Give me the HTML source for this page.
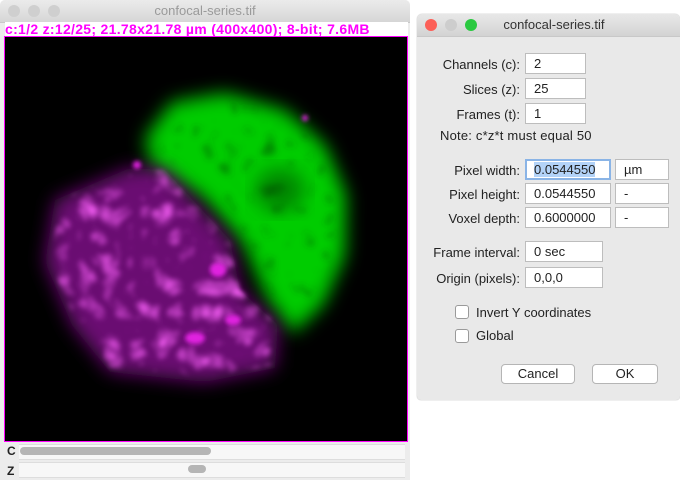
<!DOCTYPE html>
<html><head><style>
body{margin:0;width:680px;height:483px;background:#fff;position:relative;overflow:hidden;font-family:"Liberation Sans",sans-serif;font-size:13px;color:#222}
.abs{position:absolute}
.lw{left:0;top:0;width:410px;height:480px;background:#ececec;border-radius:5px 5px 0 0}
.tb{height:22px;background:linear-gradient(#ebebeb,#d6d6d6);border-bottom:1px solid #c8c8c8;text-align:center;line-height:22px;color:#9a9a9a;font-size:13px;border-radius:5px 5px 0 0}
.dot{position:absolute;top:5px;width:12px;height:12px;border-radius:50%}
.lbl{position:absolute;text-align:right;width:200px}
.fld{position:absolute;background:#fff;border:1px solid #bdbdbd;box-sizing:border-box;padding-left:8px;line-height:19px;height:21px}
.cb{position:absolute;width:12px;height:12px;border:1px solid #9a9a9a;border-radius:3px;background:#fff}
.btn{position:absolute;height:20px;background:#fff;border:1px solid #b5b5b5;border-radius:4px;box-sizing:border-box;text-align:center;line-height:18px}
</style></head><body>
<div class="abs lw">
 <div class="tb">confocal-series.tif
  <div class="dot" style="left:8px;background:#cfcfcf"></div><div class="dot" style="left:28px;background:#cfcfcf"></div><div class="dot" style="left:48px;background:#cfcfcf"></div>
 </div>
 <div class="abs" style="left:5px;top:22px;color:#f0f;font-weight:bold;font-size:14px;letter-spacing:0.3px;background:#fff;width:403px;height:14px;line-height:15px">c:1/2 z:12/25; 21.78x21.78 µm (400x400); 8-bit; 7.6MB</div>
 <div class="abs" style="left:4px;top:36px;width:402px;height:404px;border:1px solid #f0f;background:#000;overflow:hidden">
  <svg width="402" height="404" viewBox="5 37 402 404">
   <defs><filter id="b" x="-20%" y="-20%" width="140%" height="140%"><feGaussianBlur stdDeviation="9"/></filter>
   <filter id="b2"><feGaussianBlur stdDeviation="2"/></filter>
   <filter id="m" x="-10%" y="-10%" width="120%" height="120%"><feTurbulence baseFrequency="0.04" numOctaves="2" seed="5" result="t"/><feColorMatrix in="t" type="matrix" values="0 0 0 0 0.85  0 0 0 0 0.1  0 0 0 0 0.85  2.0 0 0 0 -0.45" result="c"/><feComposite in="c" in2="SourceAlpha" operator="in" result="r"/><feGaussianBlur in="r" stdDeviation="2"/></filter>
   <filter id="g" x="-10%" y="-10%" width="120%" height="120%"><feTurbulence baseFrequency="0.05" numOctaves="2" seed="9" result="t"/><feColorMatrix in="t" type="matrix" values="0 0 0 0 0  0 0 0 0 0.05  0 0 0 0 0  1.5 0 0 0 -0.55" result="c"/><feComposite in="c" in2="SourceAlpha" operator="in" result="r"/><feGaussianBlur in="r" stdDeviation="3"/></filter>
   </defs>
   <polygon filter="url(#b)" fill="#0c0" points="145,138 172,102 225,93 285,110 325,145 346,195 345,255 323,305 293,333 268,300 243,243 203,198 152,166"/>
   <polygon filter="url(#g)" fill="#000" points="160,130 180,108 225,100 285,115 320,148 338,195 337,255 318,300 295,322 272,295 248,240 208,195 160,160"/>
   <ellipse cx="280" cy="190" rx="25" ry="22" fill="#040" filter="url(#b)" opacity=".5"/>
   <polygon filter="url(#b)" fill="#6a0a72" points="55,200 130,168 165,170 230,240 240,290 278,325 275,368 205,382 110,372 72,325 45,262"/>
   <polygon filter="url(#m)" fill="#000" points="60,200 130,168 165,170 230,240 240,290 278,325 275,365 205,378 110,368 75,322 50,262"/>
   <g filter="url(#b2)" fill="#e020e0">
    <ellipse cx="218" cy="270" rx="8" ry="7"/><ellipse cx="233" cy="320" rx="8" ry="5"/>
    <ellipse cx="195" cy="338" rx="10" ry="6"/><ellipse cx="137" cy="165" rx="4" ry="4"/>
    <ellipse cx="305" cy="118" rx="3" ry="3"/>
   </g>
  </svg>
 </div>
 <div class="abs" style="left:7px;top:444px;font-weight:bold;font-size:12px">C</div>
 <div class="abs" style="left:19px;top:444px;width:386px;height:14px;background:#f7f7f7;border-top:1px solid #ddd;border-bottom:1px solid #ddd"></div>
 <div class="abs" style="left:20px;top:447px;width:191px;height:8px;background:#b5b5b5;border-radius:4px"></div>
 <div class="abs" style="left:7px;top:464px;font-weight:bold;font-size:12px">Z</div>
 <div class="abs" style="left:19px;top:462px;width:386px;height:14px;background:#f7f7f7;border-top:1px solid #ddd;border-bottom:1px solid #ddd"></div>
 <div class="abs" style="left:188px;top:465px;width:18px;height:8px;background:#b5b5b5;border-radius:4px"></div>
</div>

<div class="abs" style="left:417px;top:14px;width:263px;height:386px;background:#e9e9e9;border-radius:5px 5px 4px 4px;box-shadow:0 0 1px #999">
 <div class="tb" style="color:#333;background:linear-gradient(#e8e8e8,#d3d3d3)">&nbsp;&nbsp;&nbsp;confocal-series.tif
  <div class="dot" style="left:8px;background:#fc5f57"></div><div class="dot" style="left:28px;background:#cdcdcd"></div><div class="dot" style="left:48px;background:#2ac940"></div>
 </div>
</div>
<div class="lbl" style="left:320px;top:57px">Channels (c):</div><div class="fld" style="left:525px;top:53px;width:61px">2</div>
<div class="lbl" style="left:320px;top:82px">Slices (z):</div><div class="fld" style="left:525px;top:78px;width:61px">25</div>
<div class="lbl" style="left:320px;top:107px">Frames (t):</div><div class="fld" style="left:525px;top:103px;width:61px">1</div>
<div class="abs" style="left:440px;top:128px;letter-spacing:0.2px">Note: c*z*t must equal 50</div>
<div class="lbl" style="left:320px;top:163px">Pixel width:</div><div class="fld" style="left:525px;top:159px;width:86px;border:2px solid #8ab4e6;padding-left:7px;line-height:17px"><span style="background:#b3d3f8">0.0544550</span></div>
<div class="fld" style="left:615px;top:159px;width:54px">µm</div>
<div class="lbl" style="left:320px;top:187px">Pixel height:</div><div class="fld" style="left:525px;top:183px;width:86px">0.0544550</div><div class="fld" style="left:615px;top:183px;width:54px">-</div>
<div class="lbl" style="left:320px;top:211px">Voxel depth:</div><div class="fld" style="left:525px;top:207px;width:86px">0.6000000</div><div class="fld" style="left:615px;top:207px;width:54px">-</div>
<div class="lbl" style="left:320px;top:245px">Frame interval:</div><div class="fld" style="left:525px;top:241px;width:78px">0 sec</div>
<div class="lbl" style="left:320px;top:271px">Origin (pixels):</div><div class="fld" style="left:525px;top:267px;width:78px">0,0,0</div>
<div class="cb" style="left:455px;top:305px"></div><div class="abs" style="left:476px;top:305px">Invert Y coordinates</div>
<div class="cb" style="left:455px;top:329px"></div><div class="abs" style="left:476px;top:328px">Global</div>
<div class="btn" style="left:501px;top:364px;width:74px">Cancel</div>
<div class="btn" style="left:592px;top:364px;width:66px">OK</div>
</body></html>
